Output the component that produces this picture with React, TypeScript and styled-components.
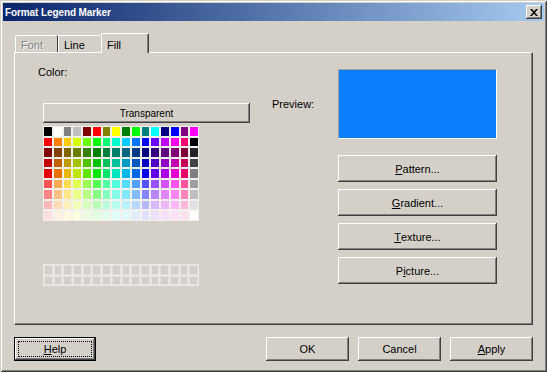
import React from "react";
import styled, { createGlobalStyle } from "styled-components";

const GlobalStyle = createGlobalStyle`
  html, body { margin: 0; padding: 0; background: #d4d0c8; }
  body { font-family: "Liberation Sans", Arial, sans-serif; font-size: 11px; color: #000; }
  * { box-sizing: border-box; }
`;

const Window = styled.div`
  width: 547px;
  height: 372px;
  background: #d4d0c8;
  padding: 3px;
  display: flex;
  flex-direction: column;
  box-shadow: inset 1px 1px 0 #d4d0c8, inset -1px -1px 0 #404040,
    inset 2px 2px 0 #ffffff, inset -2px -2px 0 #808080;
`;

const TitleBar = styled.div`
  height: 18px;
  display: flex;
  align-items: center;
  justify-content: space-between;
  padding: 0 2px 0 2px;
  background: linear-gradient(to right, #0a246a, #a6caf0);
`;

const Title = styled.span`
  color: #fff;
  font-weight: bold;
  font-size: 10px;
  letter-spacing: -0.1px;
`;

const CloseButton = styled.div`
  width: 16px;
  height: 14px;
  background: #d4d0c8;
  display: flex;
  align-items: center;
  justify-content: center;
  box-shadow: inset -1px -1px 0 #404040, inset 1px 1px 0 #fff,
    inset -2px -2px 0 #808080;
`;

const TabStrip = styled.div`
  display: flex;
  align-items: flex-end;
  height: 19px;
  margin: 12px 0 0 12px;
  position: relative;
  z-index: 1;
`;

const Tab = styled.div<{ $selected?: boolean; $disabled?: boolean; $w: number; $last?: boolean }>`
  width: ${(p) => p.$w}px;
  height: ${(p) => (p.$selected ? 20 : 17)}px;
  margin-bottom: ${(p) => (p.$selected ? -1 : 0)}px;
  padding: ${(p) => (p.$selected ? "2px" : "1px")} 0 0 5px;
  display: flex;
  align-items: center;
  background: #d4d0c8;
  border-top: 1px solid #fff;
  border-left: 1px solid #fff;
  border-right: ${(p) => (p.$last ? "1px solid #404040" : "1px solid #d4d0c8")};
  border-top-left-radius: 2px;
  border-top-right-radius: 2px;
  box-shadow: ${(p) => (p.$last ? "inset -1px 0 0 #808080" : "none")};
  color: ${(p) => (p.$disabled ? "#808080" : "#000")};
  text-shadow: ${(p) => (p.$disabled ? "1px 1px 0 #fff" : "none")};
  position: relative;
`;

const TabDivider = styled.div`
  width: 1px;
  height: 16px;
  background: #404040;
`;

const Panel = styled.div`
  height: 273px;
  margin: 0 11px;
  border-top: 1px solid #fff;
  border-left: 1px solid #fff;
  border-right: 1px solid #404040;
  border-bottom: 1px solid #404040;
  box-shadow: inset -1px -1px 0 #808080;
  padding: 13px 0 0 23px;
  display: flex;
`;

const LeftColumn = styled.div`
  width: 212px;
  display: flex;
  flex-direction: column;
`;

const Label = styled.div`
  line-height: 13px;
  height: 13px;
`;

const Button = styled.button<{ $w: number; $h: number }>`
  width: ${(p) => p.$w}px;
  height: ${(p) => p.$h}px;
  flex: none;
  background: #d4d0c8;
  border: none;
  padding: 0;
  margin: 0;
  font-family: "Liberation Sans", Arial, sans-serif;
  font-size: 11px;
  color: #000;
  box-shadow: inset -1px -1px 0 #404040, inset 1px 1px 0 #fff,
    inset -2px -2px 0 #808080;
  display: flex;
  align-items: center;
  justify-content: center;
`;

const TransparentButton = styled(Button)`
  margin: 24px 0 0 5px;
  font-size: 10px;
`;

const DefaultButton = styled(Button)`
  position: relative;
  border: 1px solid #000;
  &::after {
    content: "";
    position: absolute;
    inset: 3px;
    border: 1px dotted #000;
  }
`;

const Palette = styled.div`
  margin: 3px 0 0 5px;
  width: 156px;
  height: 95px;
  padding: 1px;
  display: grid;
  grid-template-columns: repeat(16, 1fr);
  grid-template-rows: repeat(9, 1fr);
  gap: 2px;
  background: #f1f0ec;
`;

const Swatch = styled.div<{ $c: string }>`
  background: ${(p) => p.$c};
`;

const Recent = styled.div`
  margin: 43px 0 0 5px;
  width: 156px;
  height: 22px;
  padding: 1px;
  display: grid;
  grid-template-columns: repeat(16, 1fr);
  grid-template-rows: repeat(2, 1fr);
  gap: 1px;
  background: #eceae6;
`;

const EmptySwatch = styled.div`
  background: #d3d0c9;
  border: 1px solid #e2e0da;
`;

const RightColumn = styled.div`
  margin-left: 22px;
  padding-top: 3px;
  display: grid;
  grid-template-columns: 66px 159px;
  align-content: start;
  align-items: center;
`;

const PreviewBox = styled.div`
  width: 159px;
  height: 70px;
  background: #0a80ff;
  border-top: 1px solid #a0a0a0;
  border-left: 1px solid #a0a0a0;
  border-right: 1px solid #fff;
  border-bottom: 1px solid #fff;
`;

const ButtonStack = styled.div`
  grid-column: 2;
  margin-top: 16px;
  display: flex;
  flex-direction: column;
  gap: 7px;
`;

const Footer = styled.div`
  margin: 12px 11px 0;
  display: flex;
  align-items: center;
`;

const FooterRight = styled.div`
  margin-left: auto;
  display: flex;
  gap: 9px;
`;

const hues = [0, 30, 48, 70, 95, 120, 148, 168, 192, 213, 240, 265, 285, 305, 333];
const rowSpec: { l: number; s: number; gray: string }[] = [
  { l: 50, s: 100, gray: "#000000" },
  { l: 25, s: 100, gray: "#242424" },
  { l: 38, s: 100, gray: "#444444" },
  { l: 45, s: 100, gray: "#808080" },
  { l: 66, s: 100, gray: "#a0a0a0" },
  { l: 76, s: 100, gray: "#c0c0c0" },
  { l: 86, s: 100, gray: "#e0e0e0" },
  { l: 94, s: 100, gray: "#ffffff" },
];
const firstRow = [
  "#000000", "#ffffff", "#808080", "#c0c0c0", "#800000", "#ff0000", "#808000", "#ffff00",
  "#008000", "#00ff00", "#008080", "#00ffff", "#000080", "#0000ff", "#800080", "#ff00ff",
];

const colors: string[] = [
  ...firstRow,
  ...rowSpec.flatMap((r) => [...hues.map((h) => `hsl(${h}, ${r.s}%, ${r.l}%)`), r.gray]),
];

const CloseIcon = () => (
  <svg width="8" height="7" viewBox="0 0 8 7">
    <path d="M0 0h2l2 2.5L6 0h2L5 3.5 8 7H6L4 4.5 2 7H0l3-3.5z" fill="#000" />
  </svg>
);

export default function App() {
  return (
    <>
      <GlobalStyle />
      <Window>
        <TitleBar>
          <Title>Format Legend Marker</Title>
          <CloseButton>
            <CloseIcon />
          </CloseButton>
        </TitleBar>
        <TabStrip>
          <Tab $w={42} $disabled>Font</Tab>
          <TabDivider />
          <Tab $w={43}>Line</Tab>
          <Tab $w={48} $selected $last>Fill</Tab>
        </TabStrip>
        <Panel>
          <LeftColumn>
            <Label>Color:</Label>
            <TransparentButton $w={207} $h={20}>Transparent</TransparentButton>
            <Palette>
              {colors.map((c, i) => (
                <Swatch key={i} $c={c} />
              ))}
            </Palette>
            <Recent>
              {Array.from({ length: 32 }).map((_, i) => (
                <EmptySwatch key={i} />
              ))}
            </Recent>
          </LeftColumn>
          <RightColumn>
            <Label>Preview:</Label>
            <PreviewBox />
            <ButtonStack>
              <Button $w={159} $h={27}><u>P</u>attern...</Button>
              <Button $w={159} $h={27}><u>G</u>radient...</Button>
              <Button $w={159} $h={27}><u>T</u>exture...</Button>
              <Button $w={159} $h={27}>P<u>i</u>cture...</Button>
            </ButtonStack>
          </RightColumn>
        </Panel>
        <Footer>
          <DefaultButton $w={82} $h={24}><u>H</u>elp</DefaultButton>
          <FooterRight>
            <Button $w={83} $h={24}>OK</Button>
            <Button $w={83} $h={24}>Cancel</Button>
            <Button $w={83} $h={24}><u>A</u>pply</Button>
          </FooterRight>
        </Footer>
      </Window>
    </>
  );
}
